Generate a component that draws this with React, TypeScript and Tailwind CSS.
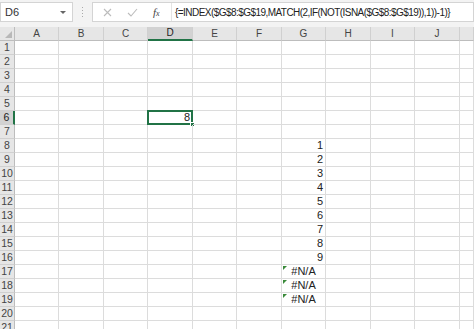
import React from 'react';

const COLS = ['A', 'B', 'C', 'D', 'E', 'F', 'G', 'H', 'I', 'J', ''];
const ROWS = Array.from({ length: 21 }, (_, i) => i + 1);

const values: Record<string, string> = {
  D6: '8',
  G8: '1',
  G9: '2',
  G10: '3',
  G11: '4',
  G12: '5',
  G13: '6',
  G14: '7',
  G15: '8',
  G16: '9',
  G17: '#N/A',
  G18: '#N/A',
  G19: '#N/A',
};

const gridCols = '15px 44px 45px 44px 45px 44px 45px 44px 45px 44px 45px 1fr';

export default function App() {
  return (
    <div className="w-[474px] h-[329px] overflow-hidden bg-white text-[#222] font-['Liberation_Sans','Open_Sans',sans-serif] select-none">
      {/* formula bar */}
      <div className="h-[27px] bg-[#f3f3f3] flex items-start pt-[2px]">
        <div className="w-[73px] shrink-0 h-[20px] bg-white border border-[#d4d4d4] flex items-center justify-between pl-[4px] pr-[6px] text-[11px] text-[#333]">
          <span>D6</span>
          <span className="w-0 h-0 border-l-[3px] border-r-[3px] border-t-[3px] border-l-transparent border-r-transparent border-t-[#666]" />
        </div>
        <div className="w-[19px] shrink-0 h-[20px] flex flex-col items-center justify-center gap-[2px]">
          <span className="w-[1px] h-[1px] bg-[#aaa]" />
          <span className="w-[1px] h-[1px] bg-[#aaa]" />
          <span className="w-[1px] h-[1px] bg-[#aaa]" />
          <span className="w-[1px] h-[1px] bg-[#aaa]" />
        </div>
        <div className="flex-1 min-w-0 overflow-hidden h-[20px] bg-white border border-[#d4d4d4] flex items-center">
          <div className="w-[78px] shrink-0 h-full flex items-center pl-[10px] gap-[15px]">
            <svg width="9" height="9" viewBox="0 0 9 9">
              <path d="M1 1L8 8M8 1L1 8" stroke="#bcbcbc" strokeWidth="1.1" fill="none" />
            </svg>
            <svg width="11" height="9" viewBox="0 0 11 9">
              <path d="M1 5L4 8L10 1" stroke="#bcbcbc" strokeWidth="1.1" fill="none" />
            </svg>
            <span className="text-[11px] italic text-[#444] font-['Liberation_Serif',serif] leading-none">
              f<span className="text-[8px]">x</span>
            </span>
          </div>
          <div className="h-full border-l border-[#e4e4e4] flex items-center pl-[3px] text-[10px] text-[#222] whitespace-nowrap tracking-[-0.55px]">
            {'{=INDEX($G$8:$G$19,MATCH(2,IF(NOT(ISNA($G$8:$G$19)),1))-1)}'}
          </div>
        </div>
      </div>

      {/* sheet */}
      <div className="grid" style={{ gridTemplateColumns: gridCols }}>
        {/* header row */}
        <div className="h-[14px] bg-[#e6e6e6] border-r border-b border-[#bdbdbd] relative">
          <span className="absolute right-[2px] bottom-[2px] w-0 h-0 border-l-[7px] border-b-[7px] border-l-transparent border-b-[#b8b8b8]" />
        </div>
        {COLS.map((c, i) => (
          <div
            key={'h' + i}
            className={`h-[14px] flex items-center justify-center text-[10px] leading-none border-r border-[#d0d0d0] ${
              c === 'D' ? 'bg-[#d2d2d2] border-b-2 border-b-[#217346] text-[#222]' : 'bg-[#e6e6e6] border-b border-b-[#bdbdbd] text-[#444]'
            }`}
          >
            {c}
          </div>
        ))}

        {ROWS.map((r) => (
          <React.Fragment key={r}>
            <div
              className={`h-[14px] flex items-center justify-center text-[10.5px] leading-none border-b border-[#d0d0d0] ${
                r === 6 ? 'bg-[#d2d2d2] border-r-2 border-r-[#217346] text-[#222]' : 'bg-[#e6e6e6] border-r border-r-[#bdbdbd] text-[#444]'
              }`}
            >
              {r}
            </div>
            {COLS.map((c, i) => {
              const key = c + r;
              const v = c ? values[key] : undefined;
              const isErr = v === '#N/A';
              const active = key === 'D6';
              return (
                <div
                  key={key + i}
                  className={`h-[14px] relative border-r border-b border-[#dcdcdc] text-[11px] leading-none flex items-center ${
                    isErr ? 'justify-center' : 'justify-end pr-[2px]'
                  }`}
                >
                  {isErr && (
                    <span className="absolute left-[1px] top-[1px] w-0 h-0 border-t-[4px] border-r-[4px] border-t-[#3a8a3a] border-r-transparent" />
                  )}
                  {active && (
                    <>
                      <span className="absolute -left-[1px] -top-[1px] right-[-1px] bottom-[-1px] border-2 border-[#217346] pointer-events-none" />
                      <span className="absolute -right-[3px] -bottom-[3px] w-[5px] h-[5px] bg-[#217346] border border-white" />
                    </>
                  )}
                  {v && <span className="relative">{v}</span>}
                </div>
              );
            })}
          </React.Fragment>
        ))}
      </div>
    </div>
  );
}
